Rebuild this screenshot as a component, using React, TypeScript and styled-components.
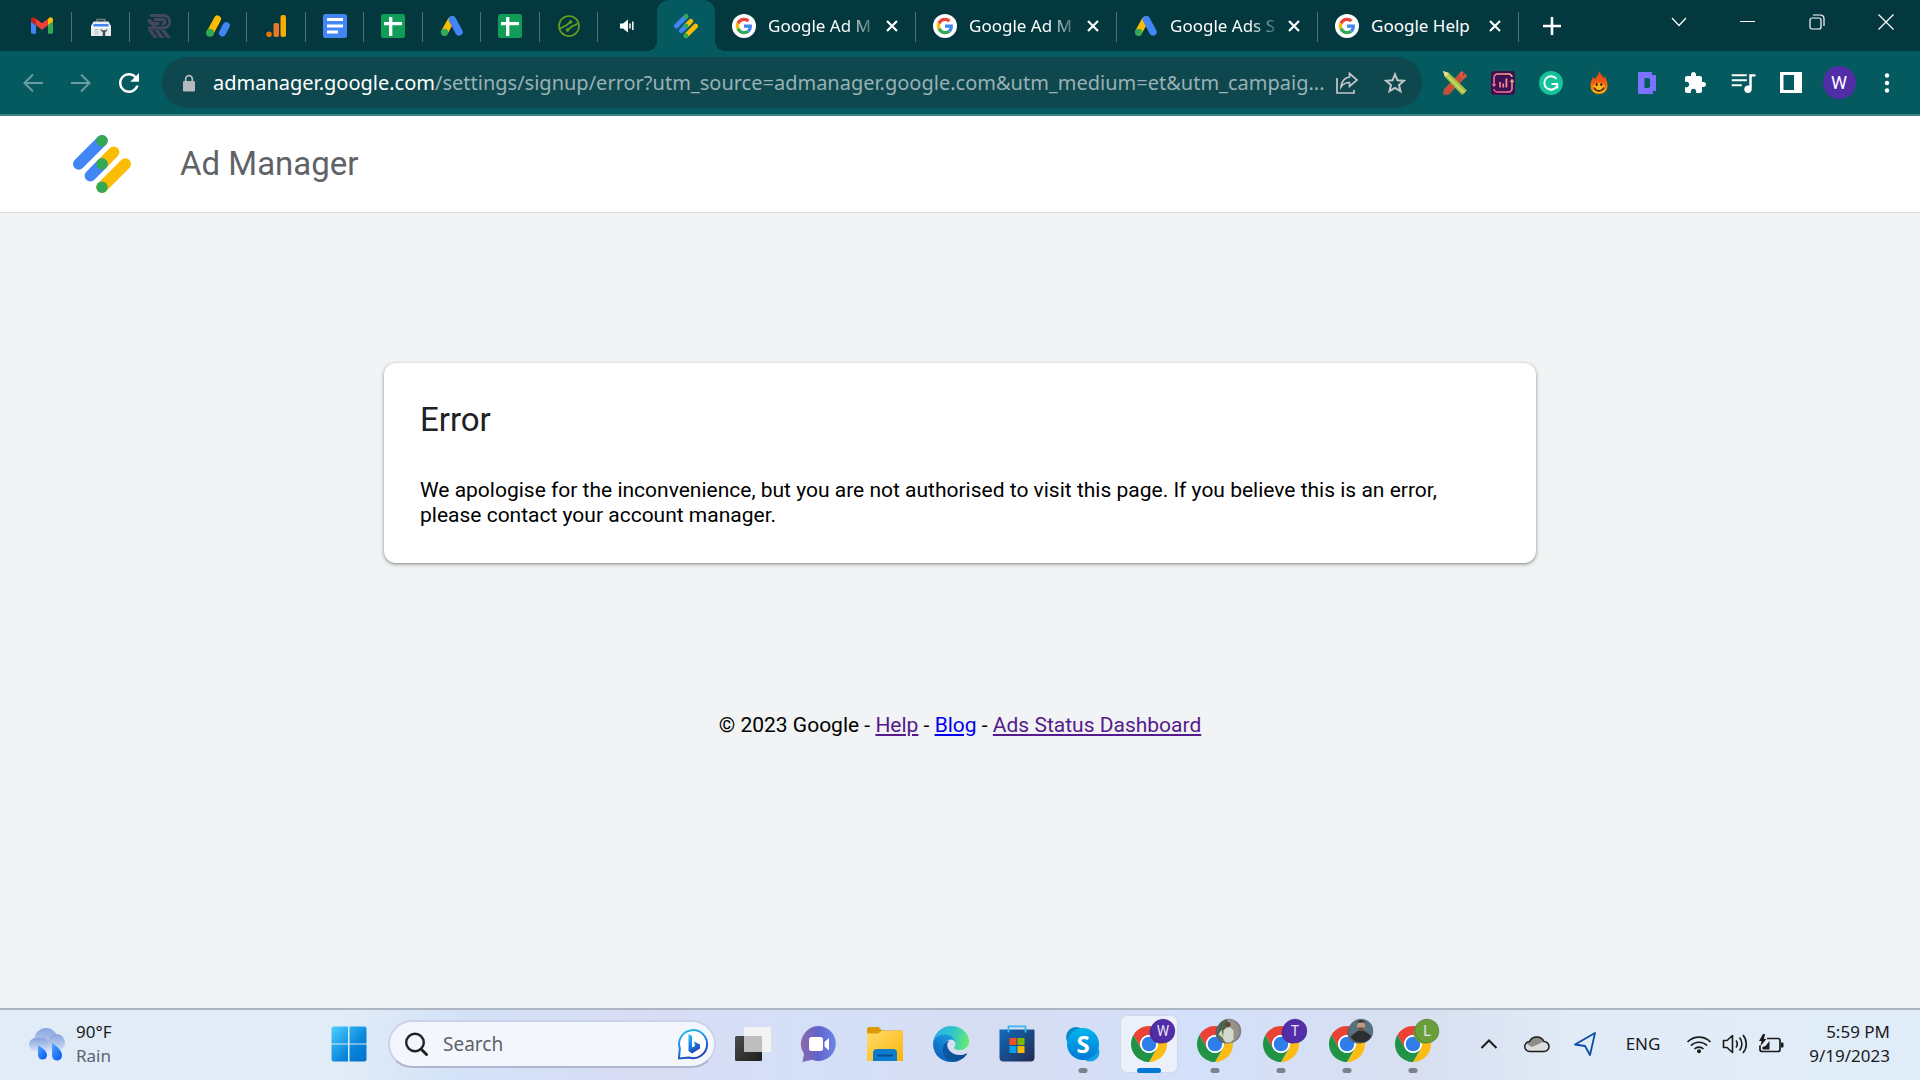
import React from 'react';
import styled, { createGlobalStyle, css } from 'styled-components';

const uiFont = `'Segoe UI', 'Noto Sans', 'Open Sans', sans-serif`;
const pageFont = `Roboto, 'Liberation Sans', sans-serif`;
const brandFont = `'Google Sans', 'Product Sans', Roboto, sans-serif`;

const GlobalStyle = createGlobalStyle`
  *, *::before, *::after { box-sizing: border-box; }
  body { margin: 0; background: #f1f3f4; }
  button { border: 0; padding: 0; background: none; color: inherit; font: inherit; cursor: pointer; }
  svg { display: block; flex: none; overflow: visible; }
  h1, p { margin: 0; }
`;

const Screen = styled.div`
  min-height: 100vh;
  display: flex;
  flex-direction: column;
  font-family: ${uiFont};
`;

/* ---------- browser tabs ---------- */

const TabStrip = styled.div`
  height: 51px;
  display: flex;
  padding-left: 13px;
  background: #03383e;
  color: #fff;
`;

const PinnedTabs = styled.div`
  width: 702px;
  flex: none;
  display: grid;
  grid-template-columns: repeat(12, 1fr);
`;

const separator = css`
  &::after {
    content: '';
    position: absolute;
    right: 0;
    top: 12px;
    height: 30px;
    width: 1px;
    background: #4d7175;
  }
`;

const PinnedTab = styled.button<{ $active?: boolean; $line?: boolean }>`
  position: relative;
  display: flex;
  align-items: center;
  justify-content: center;
  ${(p) => p.$line && separator}
  ${(p) =>
    p.$active &&
    css`
      background: #055a60;
      border-radius: 12px 12px 0 0;
      &::before,
      &::after {
        content: '';
        position: absolute;
        bottom: 0;
        width: 10px;
        height: 10px;
      }
      &::before {
        right: 100%;
        background: radial-gradient(circle at 0 0, transparent 10px, #055a60 10px);
      }
      &::after {
        left: 100%;
        background: radial-gradient(circle at 100% 0, transparent 10px, #055a60 10px);
      }
    `}
`;

const Tab = styled.div`
  position: relative;
  width: 201px;
  display: flex;
  align-items: center;
  padding: 0 14px 0 17px;
  ${separator}
`;

const TabTitle = styled.span<{ $fade: boolean }>`
  flex: 1;
  min-width: 0;
  margin-left: 12px;
  white-space: nowrap;
  font-size: 17px;
  line-height: 24px;
  ${(p) => p.$fade && 'mask-image: linear-gradient(90deg, #000 78px, transparent 114px);'}
`;

const TabClose = styled.button`
  width: 20px;
  height: 24px;
  display: flex;
  align-items: center;
  justify-content: center;
`;

const NewTab = styled.button`
  width: 66px;
  display: flex;
  align-items: center;
  justify-content: center;
`;

const WindowControls = styled.div`
  margin-left: auto;
  height: 43px;
  display: flex;
`;

const WindowButton = styled.button`
  width: 69px;
  display: flex;
  align-items: center;
  justify-content: center;
`;

/* ---------- toolbar ---------- */

const Toolbar = styled.div`
  height: 65px;
  display: flex;
  align-items: center;
  padding: 0 9px;
  background: #055a60;
  border-bottom: 2px solid #3d7f84;
  color: #fff;
`;

const ToolButton = styled.button<{ $dim?: boolean }>`
  width: 48px;
  height: 48px;
  flex: none;
  display: flex;
  align-items: center;
  justify-content: center;
  color: ${(p) => (p.$dim ? '#6a9da0' : '#fff')};
`;

const AddressBar = styled.div`
  flex: 1;
  min-width: 0;
  height: 51px;
  margin: 0 9px;
  padding: 0 3px 0 16px;
  display: flex;
  align-items: center;
  border-radius: 26px;
  background: #0e474e;
  color: #c2c6c9;
  & ${ToolButton} {
    color: #c2c6c9;
  }
`;

const Url = styled.div`
  flex: 1;
  min-width: 0;
  margin-left: 13px;
  white-space: nowrap;
  font-size: 20px;
  line-height: 28px;
  color: #98b2b5;
`;

const Host = styled.span`
  color: #fff;
`;

const Avatar = styled.span`
  width: 33px;
  height: 33px;
  border-radius: 50%;
  display: flex;
  align-items: center;
  justify-content: center;
  background: #512da8;
  font: 18px ${pageFont};
`;

/* ---------- page ---------- */

const PageHeader = styled.header`
  height: 97px;
  display: flex;
  align-items: center;
  gap: 49px;
  padding-left: 73px;
  background: #fff;
  border-bottom: 1px solid #dadce0;
`;

const Product = styled.span`
  font: 33px/40px ${brandFont};
  color: #5f6368;
`;

const Main = styled.main`
  flex: 1;
  display: flex;
  flex-direction: column;
  align-items: center;
  gap: 150px;
  padding-top: 150px;
  background: #f1f3f4;
  font: 21px/25px ${pageFont};
  color: #000;
`;

const Card = styled.section`
  width: 60%;
  padding: 37px 36px 35px;
  border-radius: 12px;
  background: #fff;
  box-shadow: 0 1px 3px rgba(60, 64, 67, 0.5), 0 2px 5px rgba(60, 64, 67, 0.15);
`;

const Title = styled.h1`
  margin-bottom: 38px;
  font: 400 33px/40px ${brandFont};
  color: #202124;
`;

const PageLink = styled.a<{ $visited?: boolean }>`
  color: ${(p) => (p.$visited ? '#551a8b' : '#0000ee')};
  text-decoration: underline;
`;

/* ---------- taskbar ---------- */

const Taskbar = styled.div`
  height: 72px;
  display: flex;
  align-items: center;
  padding-bottom: 2px;
  border-top: 2px solid #adb5c3;
  background: linear-gradient(90deg, #e1ecf7 0%, #e1ecf7 18%, #d3e2f8 24%, #d8dcf4 34%, #d4e0f7 42%, #d6ddf2 52%, #d3e0fa 62%, #d8dff0 74%, #e1ebf7 82%, #e0edf9 100%);
  color: #1b1b1b;
  font-size: 17px;
  line-height: 24px;
`;

const Weather = styled.button`
  width: 316px;
  display: flex;
  align-items: center;
  gap: 11px;
  padding-left: 29px;
  text-align: left;
`;

const Stack = styled.span`
  display: flex;
  flex-direction: column;
`;

const Muted = styled.span`
  color: #5b6470;
`;

const AppButton = styled.button<{ $state?: 'open' | 'active' }>`
  position: relative;
  width: 66px;
  height: 56px;
  display: flex;
  align-items: center;
  justify-content: center;
  ${(p) =>
    p.$state === 'active' &&
    css`
      width: 56px;
      margin: 0 5px;
      border-radius: 6px;
      background: #ecf0fa;
      box-shadow: 0 0 0 1px #d2d8ea;
    `}
  ${(p) =>
    p.$state &&
    css`
      &::after {
        content: '';
        position: absolute;
        bottom: -1px;
        left: 50%;
        width: ${p.$state === 'active' ? 24 : 9}px;
        height: 5px;
        border-radius: 3px;
        transform: translateX(-50%);
        background: ${p.$state === 'active' ? '#0078d4' : '#7c818c'};
      }
    `}
`;

const SearchBox = styled.label`
  width: 328px;
  height: 48px;
  margin: 0 4px 0 6px;
  padding: 0 5px 0 14px;
  display: flex;
  align-items: center;
  gap: 15px;
  border: 2px solid #c9d4ea;
  border-bottom-color: #adb7cd;
  border-radius: 24px;
  background: #f3f7fd;
`;

const SearchInput = styled.input`
  flex: 1;
  min-width: 0;
  border: 0;
  padding: 0;
  outline: 0;
  background: none;
  color: #1b1b1b;
  font: 19px/26px ${uiFont};
  &::placeholder {
    color: #5d6066;
    opacity: 1;
  }
`;

const Tray = styled.div`
  margin-left: auto;
  display: flex;
  align-items: center;
  padding-right: 30px;
`;

const TrayGroup = styled.div`
  display: flex;
  margin-left: 4px;
`;

const TrayButton = styled.button<{ $w: number }>`
  width: ${(p) => p.$w}px;
  height: 48px;
  display: flex;
  align-items: center;
  justify-content: center;
`;

const Clock = styled.button`
  width: 101px;
  text-align: right;
`;

/* ---------- tab icons ---------- */

const Gmail = () => (
  <svg width="22" height="17" viewBox="52 42 88 66">
    <path fill="#4285f4" d="M58 108h14V74L52 59v43c0 3.32 2.69 6 6 6" />
    <path fill="#34a853" d="M120 108h14c3.32 0 6-2.69 6-6V59l-20 15" />
    <path fill="#fbbc04" d="M120 48v26l20-15v-8c0-7.42-8.47-11.65-14.4-7.2" />
    <path fill="#ea4335" d="M72 74V48l24 18 24-18v26L96 92" />
    <path fill="#c5221f" d="M52 51v8l20 15V48l-5.6-4.2c-5.94-4.45-14.4-.22-14.4 7.2" />
  </svg>
);

const Toolbox = () => (
  <svg width="24" height="24" viewBox="0 0 24 24">
    <path d="M8 7.500V5.500h8v2" fill="none" stroke="#6f7d82" strokeWidth="1.500" />
    <path d="M4.500 7.500h15L22 12v10H2V12z" fill="#e9ecee" />
    <path d="M4.500 10h15v2.500h-15z" fill="#4285f4" />
    <path d="M2 13h20v1H2z" fill="#fff" />
    <path d="M5.500 15.500h4M5.500 17.800h4M5.500 20h4" stroke="#b4bcc2" strokeWidth="1.200" />
    <path d="M11.500 14.500c0 2 1.200 3.200 2.200 3.500V22h2.600v-4c1-.3 2.200-1.500 2.200-3.500l-1.700 1.800h-3.600z" fill="#424d55" />
  </svg>
);

const StripedR = () => (
  <svg width="24" height="24" viewBox="0 0 24 24">
    <path
      d="M3 1.500h13c9 0 9 12.500.5 12.500H10L4.500 9.500h8M1 5.500l5.500 4M7 5.500h8.500c3.500 0 3.500 4.500 0 4.500h-1M1 14h7"
      fill="none"
      stroke="#45455c"
      strokeWidth="2.800"
    />
    <path d="M.5 16H5l6 8H7zM7 16h4.500l6 8H13zM13.500 16H18l6 8h-4.500z" fill="#45455c" />
  </svg>
);

const AdSense = () => (
  <svg width="24" height="24" viewBox="0 0 24 24" strokeLinecap="round" strokeWidth="7">
    <path d="M11.500 5L4.500 18" stroke="#fbbc04" />
    <path d="M20.300 11.700L16.500 18.800" stroke="#4285f4" />
    <circle cx="4" cy="18.800" r="4" fill="#34a853" />
  </svg>
);

const Analytics = () => (
  <svg width="24" height="24" viewBox="0 0 24 24">
    <rect x="16.500" y="1" width="5.500" height="22" rx="2" fill="#f9ab00" />
    <rect x="9.500" y="9" width="5.500" height="14" rx="2" fill="#e8792a" />
    <circle cx="5" cy="20.300" r="2.800" fill="#e37400" />
  </svg>
);

const Docs = () => (
  <svg width="24" height="24" viewBox="0 0 24 24">
    <rect width="24" height="24" rx="2.500" fill="#4285f4" />
    <path d="M4 5.500h16M4 12h16M4 18h11" stroke="#fff" strokeWidth="3" />
  </svg>
);

const Sheets = () => (
  <svg width="24" height="24" viewBox="0 0 24 24">
    <rect width="24" height="24" rx="2.500" fill="#0f9d58" />
    <path d="M3 9.700h18M9.700 3v19" stroke="#fff" strokeWidth="3.300" />
  </svg>
);

const GoogleAds = () => (
  <svg width="24" height="24" viewBox="0 0 24 24" strokeLinecap="round">
    <path d="M11 6.500L4.600 18" stroke="#fbbc04" strokeWidth="7" />
    <path d="M12.300 5.600L19 18" stroke="#4285f4" strokeWidth="7.400" />
    <circle cx="4.600" cy="18.300" r="3.600" fill="#34a853" />
  </svg>
);

const GreenRing = () => (
  <svg width="24" height="24" viewBox="0 0 24 24" fill="none" stroke="#699f1b" strokeWidth="1.600" strokeLinecap="round">
    <circle cx="12" cy="12" r="10" />
    <path d="M3 14.500L9 11.500l4.500-3.500M10.500 16l4.500-3.500 6-3" />
    <circle cx="13.500" cy="8" r="1" fill="#699f1b" />
    <circle cx="10.500" cy="16" r="1" fill="#699f1b" />
  </svg>
);

const Speaker = () => (
  <svg width="16" height="14" viewBox="0 0 16 14">
    <path d="M1 4.500h3L9 .5v13l-5-4H1z" fill="#fff" />
    <path d="M11 4.500v5M13.800 2.500v8.500" stroke="#fff" strokeWidth="1.500" />
  </svg>
);

const AdManager = ({ size }: { size: number }) => (
  <svg width={size} height={size} viewBox="0 0 58 58" strokeWidth="11.400" strokeLinecap="round">
    <path d="M5.700 29L29 5.700" stroke="#4285f4" />
    <path d="M29 29L40.700 17.300" stroke="#fbbc04" />
    <path d="M17.300 40.700L29 29" stroke="#4285f4" />
    <path d="M29 52.300L52.300 29" stroke="#fbbc04" />
    <g fill="#34a853">
      <circle cx="29" cy="5.700" r="5.700" />
      <circle cx="29" cy="29" r="5.700" />
      <circle cx="29" cy="52.300" r="5.700" />
    </g>
  </svg>
);

const GoogleG = () => (
  <svg width="24" height="24" viewBox="-16 -16 80 80">
    <circle cx="24" cy="24" r="40" fill="#fff" />
    <g transform="translate(24 24) scale(1.150) translate(-24 -24)">
      <path fill="#ea4335" d="M24 9.500c3.540 0 6.710 1.220 9.210 3.600l6.850-6.850C35.900 2.380 30.470 0 24 0 14.620 0 6.510 5.380 2.560 13.220l7.980 6.190C12.430 13.720 17.740 9.500 24 9.500z" />
      <path fill="#4285f4" d="M46.980 24.550c0-1.570-.15-3.090-.38-4.550H24v9.020h12.940c-.58 2.960-2.260 5.480-4.780 7.180l7.730 6c4.510-4.180 7.090-10.360 7.090-17.650z" />
      <path fill="#fbbc05" d="M10.530 28.590c-.48-1.450-.76-2.990-.76-4.590s.27-3.140.76-4.590l-7.980-6.190C.92 16.460 0 20.120 0 24c0 3.880.92 7.540 2.560 10.780l7.970-6.190z" />
      <path fill="#34a853" d="M24 48c6.480 0 11.930-2.130 15.890-5.810l-7.730-6c-2.150 1.450-4.920 2.300-8.160 2.300-6.260 0-11.570-4.220-13.470-9.910l-7.980 6.190C6.510 42.620 14.620 48 24 48z" />
    </g>
  </svg>
);

const Cross = () => (
  <svg width="12" height="12" viewBox="0 0 12 12" stroke="#fff" strokeWidth="2.200">
    <path d="M1 1l10 10M11 1L1 11" />
  </svg>
);

/* ---------- toolbar icons ---------- */

const Arrow = ({ flip }: { flip?: boolean }) => (
  <svg width="22" height="20" viewBox="0 0 22 20" fill="none" stroke="currentColor" strokeWidth="2">
    <path d={flip ? 'M1 10h18M11 1.500l8.500 8.500-8.500 8.500' : 'M21 10H3M11 1.500L2.500 10l8.500 8.500'} />
  </svg>
);

const Reload = () => (
  <svg width="30" height="30" viewBox="0 0 24 24" fill="currentColor">
    <path d="M17.650 6.350C16.200 4.900 14.210 4 12 4c-4.420 0-7.990 3.580-7.990 8s3.570 8 7.990 8c3.730 0 6.840-2.550 7.730-6h-2.080c-.82 2.330-3.040 4-5.650 4-3.310 0-6-2.690-6-6s2.690-6 6-6c1.660 0 3.140.69 4.220 1.780L13 11h7V4l-2.350 2.350z" />
  </svg>
);

const Lock = () => (
  <svg width="22" height="18" viewBox="0 0 22 18">
    <rect x="5" y="7" width="12" height="10.500" rx="1.200" fill="#b4babe" />
    <path d="M7.700 7.500V5a3.300 3.300 0 0 1 6.600 0v2.500" fill="none" stroke="#b4babe" strokeWidth="1.700" />
  </svg>
);

const Share = () => (
  <svg width="24" height="24" viewBox="0 0 24 24" fill="none" stroke="currentColor" strokeWidth="1.700">
    <path d="M2 7v15h17v-3" />
    <path d="M14.500 2.500L22 9l-7.500 6.500v-4C10.500 11.500 8 13 6 16c.3-5 3.500-9.500 8.500-10z" />
  </svg>
);

const Star = () => (
  <svg width="24" height="24" viewBox="0 0 24 24" fill="none" stroke="currentColor" strokeWidth="2">
    <path d="M12 3.400l2.500 5.900 6.400.5-4.900 4.200 1.500 6.200-5.500-3.300-5.500 3.300L8 14 3.100 9.800l6.400-.5z" />
  </svg>
);

const PencilRuler = () => (
  <svg width="24" height="24" viewBox="0 0 24 24">
    <path d="M19 0l5 5L5.500 24 0 23.500 1 18z" fill="#c5503a" />
    <path d="M19 0l5 5-3 3-5-5z" fill="#dc5a3f" />
    <circle cx="20.500" cy="3.500" r="1" fill="#6c2a20" />
    <path d="M0 0l6 2L24 19.500 19 24 2 6z" fill="#a5bf43" />
    <path d="M3.500 4L21.500 22" stroke="#c7d76b" strokeWidth="2" />
    <path d="M0 0l6 2-4 4z" fill="#ead9a2" />
  </svg>
);

const ChartCycle = () => (
  <svg width="24" height="24" viewBox="0 0 24 24">
    <defs>
      <linearGradient id="cycle" x1="0" y1="24" x2="24" y2="0" gradientUnits="userSpaceOnUse">
        <stop offset="0" stopColor="#f0468c" />
        <stop offset="1" stopColor="#ffc58a" />
      </linearGradient>
    </defs>
    <rect width="24" height="24" rx="3" fill="#3b1152" />
    <g fill="none" stroke="url(#cycle)" strokeWidth="1.500">
      <path d="M3 15V6.500A3.500 3.500 0 0 1 6.500 3H18a3.500 3.500 0 0 1 3 3" />
      <path d="M21 9v8.500a3.500 3.500 0 0 1-3.500 3.500H6a3.500 3.500 0 0 1-3-3" />
      <path d="M1.500 13L3 15l1.500-2M19.500 11L21 9l1.500 2" />
      <path d="M9 16.500V11M12.200 16.500v-4M15.400 16.500v-9" strokeWidth="1.800" />
    </g>
  </svg>
);

const Grammarly = () => (
  <svg width="24" height="24" viewBox="0 0 24 24">
    <circle cx="12" cy="12" r="12" fill="#15c39a" />
    <path d="M17.500 8A6.700 6.700 0 1 0 18 15M12.500 13h5.700v4.500" fill="none" stroke="#fff" strokeWidth="2" />
  </svg>
);

const Flame = () => (
  <svg width="18" height="24" viewBox="0 0 18 24">
    <defs>
      <linearGradient id="flame" x1="0" y1="0" x2="0" y2="1">
        <stop offset="0" stopColor="#e8401a" />
        <stop offset=".45" stopColor="#ee5a12" />
        <stop offset="1" stopColor="#ffa000" />
      </linearGradient>
    </defs>
    <path d="M9 0c1 3 4 4 4.500 7.500L15.500 5c0 3 2 5 2 9.500C17.500 20 14 23 9 23S.5 20 .5 14.500C.5 10 2.500 9 3 6l2 2c1-2 4-4 4-8z" fill="url(#flame)" />
    <ellipse cx="9" cy="17" rx="6" ry="5" fill="#ffb21c" />
    <ellipse cx="6.700" cy="13.500" rx="1" ry="1.600" fill="#2c1504" />
    <ellipse cx="11.300" cy="13.500" rx="1" ry="1.600" fill="#2c1504" />
    <path d="M4 16.500c2 4.500 8 4.500 10 0" fill="none" stroke="#2c1504" strokeWidth="1.500" />
  </svg>
);

const BlockD = () => (
  <svg width="20" height="22" viewBox="0 0 20 22">
    <path d="M1 0h14v3h4v16h-3v3H1z M7.500 6v10h4.500v-1h1V7h-1V6z" fill="#7a73ff" fillRule="evenodd" />
  </svg>
);

const Puzzle = () => (
  <svg width="24" height="24" viewBox="0 0 24 24" fill="#fff">
    <path d="M20.500 11H19V7c0-1.100-.9-2-2-2h-4V3.500C13 2.120 11.880 1 10.500 1S8 2.120 8 3.500V5H4c-1.100 0-1.990.9-1.990 2v3.800H3.500c1.490 0 2.700 1.210 2.700 2.700s-1.210 2.700-2.700 2.700H2V20c0 1.100.9 2 2 2h3.800v-1.500c0-1.490 1.210-2.700 2.700-2.700 1.490 0 2.700 1.210 2.700 2.700V22H17c1.100 0 2-.9 2-2v-4h1.500c1.380 0 2.500-1.120 2.500-2.500S21.880 11 20.500 11z" />
  </svg>
);

const Queue = () => (
  <svg width="30" height="30" viewBox="0 0 24 24" fill="#fff">
    <path d="M15 5H3v1.600h12V5zm0 4H3v1.600h12V9zM3 14.600h8V13H3v1.600zM17 5v9.180c-.31-.11-.65-.18-1-.18-1.660 0-3 1.340-3 3s1.340 3 3 3 3-1.340 3-3V6.800h3V5h-5z" />
  </svg>
);

const SidePanel = () => (
  <svg width="22" height="21" viewBox="0 0 22 21">
    <path d="M0 0h22v21H0zM3.500 3v15H14V3z" fill="#fff" fillRule="evenodd" />
  </svg>
);

const Dots = () => (
  <svg width="6" height="20" viewBox="0 0 6 20" fill="#fff">
    <circle cx="3" cy="2.500" r="2.200" />
    <circle cx="3" cy="10" r="2.200" />
    <circle cx="3" cy="17.500" r="2.200" />
  </svg>
);

/* ---------- taskbar icons ---------- */

const RainCloud = () => (
  <svg width="36" height="33" viewBox="0 0 36 33">
    <defs>
      <linearGradient id="cloud" x1="0" y1="0" x2="0" y2="1">
        <stop offset="0" stopColor="#86a4de" />
        <stop offset="1" stopColor="#d3dff7" />
      </linearGradient>
      <linearGradient id="drop" x1="0" y1="0" x2="1" y2="1">
        <stop offset="0" stopColor="#57a5ff" />
        <stop offset="1" stopColor="#0057f5" />
      </linearGradient>
    </defs>
    <circle cx="17" cy="11.500" r="11.500" fill="url(#cloud)" />
    <rect x="0" y="10" width="20" height="13" rx="6.500" fill="url(#cloud)" />
    <circle cx="27.500" cy="14.500" r="8.500" fill="url(#cloud)" />
    <path d="M9 17c5 3 9 7 9 10a4.500 4.500 0 0 1-9 0z" fill="url(#drop)" />
    <path d="M23 15c5 3 10 8 10 12a5 5 0 0 1-10 1z" fill="url(#drop)" />
  </svg>
);

const Windows = () => (
  <svg width="36" height="36" viewBox="0 0 36 36">
    <defs>
      <linearGradient id="win" x1="0" y1="0" x2="36" y2="36" gradientUnits="userSpaceOnUse">
        <stop offset="0" stopColor="#4cd0ff" />
        <stop offset=".6" stopColor="#0a86dc" />
        <stop offset="1" stopColor="#0070cc" />
      </linearGradient>
    </defs>
    <path d="M2 .5h15v17H.5V2zM18.500.5H34L35.500 2v15.500h-17zM.5 18.500H17v17H2L.5 34zM18.500 18.500h17V34L34 35.500H18.500z" fill="url(#win)" />
  </svg>
);

const Magnifier = () => (
  <svg width="24" height="24" viewBox="0 0 24 24" fill="none" stroke="#222" strokeWidth="2.400" strokeLinecap="round">
    <circle cx="11" cy="10.500" r="8.800" />
    <path d="M17 17l5.500 5.500" strokeWidth="3" />
  </svg>
);

const Bing = () => (
  <svg width="32" height="32" viewBox="0 0 32 32">
    <defs>
      <linearGradient id="bing" x1="0" y1="0" x2=".4" y2="1">
        <stop offset="0" stopColor="#2bc8f2" />
        <stop offset=".6" stopColor="#1d7be0" />
        <stop offset="1" stopColor="#1b48b8" />
      </linearGradient>
    </defs>
    <path d="M2 30.500l.8-10A14 14 0 1 1 12 29.500z" fill="#fff" stroke="url(#bing)" strokeWidth="2" />
    <path d="M11.500 6l3.500 2v11.500l3-1.500-1-4.500 6 3v4L15 25.500l-3.500-2.500z" fill="url(#bing)" />
  </svg>
);

const TaskView = () => (
  <svg width="36" height="34" viewBox="0 0 36 34">
    <defs>
      <linearGradient id="tvd" x1="0" y1="0" x2="1" y2="1">
        <stop offset="0" stopColor="#4c4c4c" />
        <stop offset="1" stopColor="#1e1e1e" />
      </linearGradient>
    </defs>
    <rect x="0" y="9" width="27" height="25" rx="1.500" fill="url(#tvd)" />
    <rect x="9" y="0" width="27" height="25" rx="1.500" fill="#f3f3f3" />
    <path d="M9 9h18v16H10.500L9 23.500z" fill="#bdbdbd" />
  </svg>
);

const Chat = () => (
  <svg width="36" height="36" viewBox="0 0 36 36">
    <defs>
      <linearGradient id="chat" x1="0" y1="0" x2="1" y2="0">
        <stop offset="0" stopColor="#8d68a8" />
        <stop offset=".5" stopColor="#6164cc" />
        <stop offset="1" stopColor="#6e86e8" />
      </linearGradient>
    </defs>
    <path d="M18 0a17.500 17.500 0 1 1-7 33.800L1.500 36 3 28A18 18 0 0 1 18 0z" fill="url(#chat)" />
    <rect x="8" y="11" width="14" height="14" rx="2.500" fill="#fff" />
    <path d="M23.500 16l4.500-4v12.500l-4.500-4z" fill="#fff" />
  </svg>
);

const Folder = () => (
  <svg width="36" height="34" viewBox="0 0 36 34">
    <defs>
      <linearGradient id="folder" x1="0" y1="0" x2="1" y2="1">
        <stop offset="0" stopColor="#ffdc6e" />
        <stop offset="1" stopColor="#fbb505" />
      </linearGradient>
    </defs>
    <path d="M0 1.500L1.500 0h10L15 3.500h19.500L36 5v8H0z" fill="#dd9a05" />
    <path d="M0 6.500h11l3.500-2.500H36v30H0z" fill="url(#folder)" />
    <path d="M6 34v-8a4 4 0 0 1 4-4h16a4 4 0 0 1 4 4v8z" fill="#0d7bce" />
    <path d="M11 28.500h14" stroke="#064f91" strokeWidth="2" strokeLinecap="round" />
  </svg>
);

const Edge = () => (
  <svg width="36" height="36" viewBox="0 0 256 256">
    <defs>
      <linearGradient id="e1" x1="63" y1="178" x2="241" y2="178" gradientUnits="userSpaceOnUse">
        <stop offset="0" stopColor="#0c59a4" />
        <stop offset="1" stopColor="#114a8b" />
      </linearGradient>
      <linearGradient id="e2" x1="150" y1="80" x2="40" y2="230" gradientUnits="userSpaceOnUse">
        <stop offset="0" stopColor="#1b9de2" />
        <stop offset="1" stopColor="#0c63bd" />
      </linearGradient>
      <linearGradient id="e3" x1="10" y1="60" x2="250" y2="120" gradientUnits="userSpaceOnUse">
        <stop offset="0" stopColor="#2cb2ea" />
        <stop offset=".5" stopColor="#30c6c8" />
        <stop offset="1" stopColor="#66eb6e" />
      </linearGradient>
    </defs>
    <path fill="url(#e1)" d="M235.680 195.460a93.730 93.730 0 0 1-10.540 4.710 101.870 101.870 0 0 1-35.900 6.460c-47.320 0-88.540-32.550-88.540-74.320A31.480 31.480 0 0 1 117.130 105c-42.800 1.800-53.800 46.400-53.800 72.530 0 73.880 68.090 78.370 82.760 78.370 7.910 0 19.840-2.300 27-4.560l1.310-.44a128.340 128.340 0 0 0 66.600-49.800 4 4 0 0 0-5.320-5.640z" />
    <path fill="url(#e2)" d="M105.730 241.420a79.200 79.200 0 0 1-22.740-21.340 80.720 80.720 0 0 1 29.530-120c3.120-1.470 8.450-4.130 15.540-4a32.350 32.350 0 0 1 25.690 13 31.880 31.880 0 0 1 6.360 18.660c0-.21 24.460-79.600-80-79.600-43.900 0-80 41.660-80 78.210a130.150 130.150 0 0 0 12.110 56 128 128 0 0 0 156.380 67.110 75.550 75.550 0 0 1-62.780-8z" />
    <path fill="url(#e3)" d="M152.330 148.860c-.81 1.050-3.300 2.500-3.300 5.660 0 2.610 1.700 5.120 4.720 7.230 14.380 10 41.490 8.680 41.560 8.680a59.560 59.560 0 0 0 30.270-8.350 61.380 61.380 0 0 0 30.430-52.880c.26-22.410-8-37.310-11.340-43.910C223.480 23.840 177.720 0 128 0A128 128 0 0 0 0 126.200c.48-36.540 36.800-66.050 80-66.050 3.500 0 23.460.34 42 10.070 16.340 8.580 24.900 18.940 30.850 29.210 6.180 10.670 7.280 24.150 7.280 29.520s-2.740 13.330-7.800 19.910z" />
  </svg>
);

const Store = () => (
  <svg width="36" height="36" viewBox="0 1.500 36 36">
    <defs>
      <linearGradient id="store" x1="0" y1="0" x2="1" y2="1">
        <stop offset="0" stopColor="#0f6cbd" />
        <stop offset="1" stopColor="#25294f" />
      </linearGradient>
    </defs>
    <path d="M.5 5h35v28a4 4 0 0 1-4 4h-27a4 4 0 0 1-4-4z" fill="url(#store)" />
    <path d="M9.500 8V1.800h17V8" fill="none" stroke="#37b8f0" strokeWidth="1.800" />
    <path d="M10.500 13.500h7v7h-7z" fill="#f25022" />
    <path d="M18.500 13.500h7v7h-7z" fill="#7fba00" />
    <path d="M10.500 21.500h7v7h-7z" fill="#00a4ef" />
    <path d="M18.500 21.500h7v7h-7z" fill="#ffb900" />
  </svg>
);

const Skype = () => (
  <svg width="34" height="36" viewBox="0 0 34 36">
    <defs>
      <linearGradient id="skype" x1="0" y1="0" x2="0" y2="1">
        <stop offset="0" stopColor="#00b7f0" />
        <stop offset="1" stopColor="#0078d4" />
      </linearGradient>
    </defs>
    <circle cx="10" cy="11" r="10" fill="#0b86c9" />
    <circle cx="24" cy="26" r="9.500" fill="#12a0e8" />
    <circle cx="17" cy="18" r="16" fill="url(#skype)" />
    <text x="17" y="26.500" textAnchor="middle" fill="#fff" fontFamily="Noto Sans, sans-serif" fontWeight="700" fontSize="24">S</text>
  </svg>
);

type Badge = { letter?: string; color?: string; photo?: 'outdoor' | 'portrait' };

const Chrome = ({ letter, color, photo }: Badge) => (
  <svg width="46" height="46" viewBox="0 0 46 46">
    <g transform="translate(5 5) scale(.75)">
      <path fill="#ea4335" d="M24 12h20.780A24 24 0 0 0 3.220 12l10.390 18A12 12 0 0 1 24 12z" />
      <path fill="#fbbc15" d="M34.390 30L24 48a24 24 0 0 0 20.780-36H24a12 12 0 0 1 10.390 18z" />
      <path fill="#219346" d="M13.610 30L3.220 12A24 24 0 0 0 24 48l10.390-18a12 12 0 0 1-20.780 0z" />
      <circle cx="24" cy="24" r="12" fill="#fff" />
      <circle cx="24" cy="24" r="9.700" fill="#2f7de9" />
    </g>
    <g transform="translate(1.500 -2.500)">
      <circle cx="33" cy="14" r="11" fill={color || '#55606a'} />
      <circle cx="35.500" cy="12.500" r="12" fill={color || '#7c8788'} stroke="rgba(40,40,60,.3)" strokeWidth=".8" />
      {letter && (
        <text x="35.500" y="17.500" textAnchor="middle" fill="#e9e2f6" fontFamily="Roboto, sans-serif" fontSize="14">
          {letter}
        </text>
      )}
      {photo === 'outdoor' && (
        <g>
          <path d="M25 8a12 12 0 0 1 9-7.500V23a12 12 0 0 1-10-9z" fill="#4d6349" />
          <path d="M34 .7a12 12 0 0 1 7 21.500l-5-2z" fill="#9a9186" />
          <circle cx="34.500" cy="6" r="2.500" fill="#5d4538" />
          <path d="M30 12l3-3h4l3 3v9l-3 3h-5l-2.500-4z" fill="#d3dacd" />
          <path d="M25 16l3-5 2 9z" fill="#c9d4c4" />
        </g>
      )}
      {photo === 'portrait' && (
        <g>
          <circle cx="35.500" cy="12.500" r="12" fill="#567180" />
          <circle cx="35.500" cy="7" r="4" fill="#c19a84" />
          <path d="M31.500 5.500c0-5 8-5 8 0l-1-1.500h-6z" fill="#33251f" />
          <path d="M32.500 9h6l-1 3.500h-4z" fill="#684b3c" />
          <path d="M25 18l7-5.500h7l7 5a12 12 0 0 1-21 .5z" fill="#2e2e30" />
        </g>
      )}
    </g>
  </svg>
);

const ChevronUp = () => (
  <svg width="18" height="12" viewBox="0 0 18 12" fill="none" stroke="#1b1b1b" strokeWidth="2">
    <path d="M1.500 10L9 2.500l7.500 7.500" />
  </svg>
);

const OneDrive = () => (
  <svg width="26" height="18" viewBox="0 0 26 18">
    <path d="M6 16.500a5 5 0 0 1-.5-10A8 8 0 0 1 20 6.500a5 5 0 0 1 0 10z" fill="#dcdcdc" />
    <path d="M5.500 6.500A8 8 0 0 1 20 6.500L8 12l-5-3z" fill="#8d8d8d" />
    <path d="M6 16.500a5 5 0 0 1-.5-10A8 8 0 0 1 20 6.500a5 5 0 0 1 0 10z" fill="none" stroke="#1b1b1b" strokeWidth="1.500" />
  </svg>
);

const Location = () => (
  <svg width="24" height="26" viewBox="0 0 24 26" fill="none" stroke="#0b4ea2" strokeWidth="1.800" strokeLinejoin="round">
    <path d="M22 2L2 13.500l10 1.500 5 9z" />
  </svg>
);

const Wifi = () => (
  <svg width="26" height="20" viewBox="0 0 26 20" fill="none" stroke="#1b1b1b" strokeWidth="1.700">
    <path d="M1.500 8a16 16 0 0 1 23 0M5 11.700a11 11 0 0 1 16 0M8.500 15a6.300 6.300 0 0 1 9 0" />
    <circle cx="13" cy="17.300" r="2" fill="#1b1b1b" stroke="none" />
  </svg>
);

const Volume = () => (
  <svg width="26" height="22" viewBox="0 0 26 22" fill="none" stroke="#1b1b1b" strokeWidth="1.600" strokeLinejoin="round">
    <path d="M1.500 7.500H5l5.500-5v17L5 14.500H1.500z" />
    <path d="M14 7.500a6 6 0 0 1 0 7M17.500 4.500a10 10 0 0 1 0 13M21 2a14 14 0 0 1 0 18" />
  </svg>
);

const Battery = () => (
  <svg width="26" height="22" viewBox="0 0 26 22">
    <path d="M9 5.500h11a2 2 0 0 1 2 2v9a2 2 0 0 1-2 2H4a2 2 0 0 1-2-2v-4" fill="none" stroke="#1b1b1b" strokeWidth="1.700" />
    <path d="M23 9.500h1.500q1 0 1 1v3q0 1-1 1H23zM4.500 16.500v-2.500l3-1 4-5v8.500z" fill="#1b1b1b" />
    <path d="M5 1L1 8h2.500L2.500 13l6-7H6l1-5z" fill="#1b1b1b" />
  </svg>
);

/* ---------- data ---------- */

const pinned = [
  { name: 'Gmail', icon: <Gmail /> },
  { name: 'Toolbox', icon: <Toolbox /> },
  { name: 'Reader', icon: <StripedR /> },
  { name: 'AdSense', icon: <AdSense /> },
  { name: 'Analytics', icon: <Analytics /> },
  { name: 'Docs', icon: <Docs /> },
  { name: 'Sheets', icon: <Sheets /> },
  { name: 'Google Ads', icon: <GoogleAds /> },
  { name: 'Sheets', icon: <Sheets /> },
  { name: 'Network', icon: <GreenRing /> },
  { name: 'Playing audio', icon: <Speaker /> },
  { name: 'Ad Manager', icon: <AdManager size={24} /> },
];

const tabs = [
  { title: 'Google Ad M', icon: <GoogleG />, fade: true },
  { title: 'Google Ad M', icon: <GoogleG />, fade: true },
  { title: 'Google Ads S', icon: <GoogleAds />, fade: true },
  { title: 'Google Help', icon: <GoogleG />, fade: false },
];

const extensions = [
  { name: 'Pencil and ruler', icon: <PencilRuler /> },
  { name: 'Charts', icon: <ChartCycle /> },
  { name: 'Grammarly', icon: <Grammarly /> },
  { name: 'Flame', icon: <Flame /> },
  { name: 'D', icon: <BlockD /> },
  { name: 'Extensions', icon: <Puzzle /> },
  { name: 'Media', icon: <Queue /> },
  { name: 'Side panel', icon: <SidePanel /> },
  { name: 'Profile', icon: <Avatar>W</Avatar> },
  { name: 'Menu', icon: <Dots /> },
];

const apps: { name: string; icon: React.ReactNode; state?: 'open' | 'active' }[] = [
  { name: 'Task view', icon: <TaskView /> },
  { name: 'Chat', icon: <Chat /> },
  { name: 'File Explorer', icon: <Folder /> },
  { name: 'Edge', icon: <Edge /> },
  { name: 'Store', icon: <Store /> },
  { name: 'Skype', icon: <Skype />, state: 'open' },
  { name: 'Chrome W', icon: <Chrome letter="W" color="#512da8" />, state: 'active' },
  { name: 'Chrome 2', icon: <Chrome photo="outdoor" />, state: 'open' },
  { name: 'Chrome T', icon: <Chrome letter="T" color="#512da8" />, state: 'open' },
  { name: 'Chrome 4', icon: <Chrome photo="portrait" />, state: 'open' },
  { name: 'Chrome L', icon: <Chrome letter="L" color="#689f38" />, state: 'open' },
];

export default function App() {
  return (
    <Screen>
      <GlobalStyle />
      <TabStrip>
        <PinnedTabs>
          {pinned.map((t, i) => (
            <PinnedTab key={i} aria-label={t.name} $line={i < 10} $active={i === 11}>
              {t.icon}
            </PinnedTab>
          ))}
        </PinnedTabs>
        {tabs.map((t, i) => (
          <Tab key={i}>
            {t.icon}
            <TabTitle $fade={t.fade}>{t.title}</TabTitle>
            <TabClose aria-label="Close tab">
              <Cross />
            </TabClose>
          </Tab>
        ))}
        <NewTab aria-label="New tab">
          <svg width="18" height="18" viewBox="0 0 18 18" stroke="#fff" strokeWidth="2.600">
            <path d="M9 0v18M0 9h18" />
          </svg>
        </NewTab>
        <WindowControls>
          <WindowButton aria-label="Search tabs">
            <svg width="16" height="10" viewBox="0 0 16 10" fill="none" stroke="#fff" strokeWidth="1.200">
              <path d="M1 1l7 7.500L15 1" />
            </svg>
          </WindowButton>
          <WindowButton aria-label="Minimise">
            <svg width="15" height="1" viewBox="0 0 15 1">
              <path d="M0 0h15v1H0z" fill="#fff" />
            </svg>
          </WindowButton>
          <WindowButton aria-label="Restore">
            <svg width="16" height="16" viewBox="0 0 16 16" fill="none" stroke="#fff" strokeWidth="1.200">
              <rect x="1" y="4" width="11" height="11" rx="2" />
              <path d="M4 1h7.500A3.500 3.500 0 0 1 15 4.500V12" />
            </svg>
          </WindowButton>
          <WindowButton aria-label="Close">
            <svg width="16" height="16" viewBox="0 0 16 16" stroke="#fff" strokeWidth="1.200">
              <path d="M.5.5l15 15M15.500.5l-15 15" />
            </svg>
          </WindowButton>
        </WindowControls>
      </TabStrip>

      <Toolbar>
        <ToolButton $dim aria-label="Back">
          <Arrow />
        </ToolButton>
        <ToolButton $dim aria-label="Forward">
          <Arrow flip />
        </ToolButton>
        <ToolButton aria-label="Reload">
          <Reload />
        </ToolButton>
        <AddressBar>
          <Lock />
          <Url role="textbox" aria-label="Address">
            <Host>admanager.google.com</Host>
            /settings/signup/error?utm_source=admanager.google.com&amp;utm_medium=et&amp;utm_campaig...
          </Url>
          <ToolButton aria-label="Share">
            <Share />
          </ToolButton>
          <ToolButton aria-label="Bookmark">
            <Star />
          </ToolButton>
        </AddressBar>
        {extensions.map((e) => (
          <ToolButton key={e.name} aria-label={e.name}>
            {e.icon}
          </ToolButton>
        ))}
      </Toolbar>

      <PageHeader>
        <AdManager size={58} />
        <Product>Ad Manager</Product>
      </PageHeader>

      <Main>
        <Card>
          <Title>Error</Title>
          <p>
            We apologise for the inconvenience, but you are not authorised to visit this page. If you believe this is an
            error, please contact your account manager.
          </p>
        </Card>
        <footer>
          © 2023 Google - <PageLink href="#help" $visited>Help</PageLink> - <PageLink href="#blog">Blog</PageLink> -{' '}
          <PageLink href="#status" $visited>Ads Status Dashboard</PageLink>
        </footer>
      </Main>

      <Taskbar>
        <Weather>
          <RainCloud />
          <Stack>
            <span>90°F</span>
            <Muted>Rain</Muted>
          </Stack>
        </Weather>
        <AppButton aria-label="Start">
          <Windows />
        </AppButton>
        <SearchBox>
          <Magnifier />
          <SearchInput type="search" placeholder="Search" aria-label="Search" />
          <Bing />
        </SearchBox>
        {apps.map((a) => (
          <AppButton key={a.name} aria-label={a.name} $state={a.state}>
            {a.icon}
          </AppButton>
        ))}
        <Tray>
          <TrayButton $w={48} aria-label="Hidden icons">
            <ChevronUp />
          </TrayButton>
          <TrayButton $w={48} aria-label="OneDrive">
            <OneDrive />
          </TrayButton>
          <TrayButton $w={48} aria-label="Location">
            <Location />
          </TrayButton>
          <TrayButton $w={68}>ENG</TrayButton>
          <TrayGroup>
            <TrayButton $w={36} aria-label="Network">
              <Wifi />
            </TrayButton>
            <TrayButton $w={36} aria-label="Volume">
              <Volume />
            </TrayButton>
            <TrayButton $w={36} aria-label="Battery">
              <Battery />
            </TrayButton>
          </TrayGroup>
          <Clock>
            <Stack>
              <span>5:59 PM</span>
              <span>9/19/2023</span>
            </Stack>
          </Clock>
        </Tray>
      </Taskbar>
    </Screen>
  );
}
